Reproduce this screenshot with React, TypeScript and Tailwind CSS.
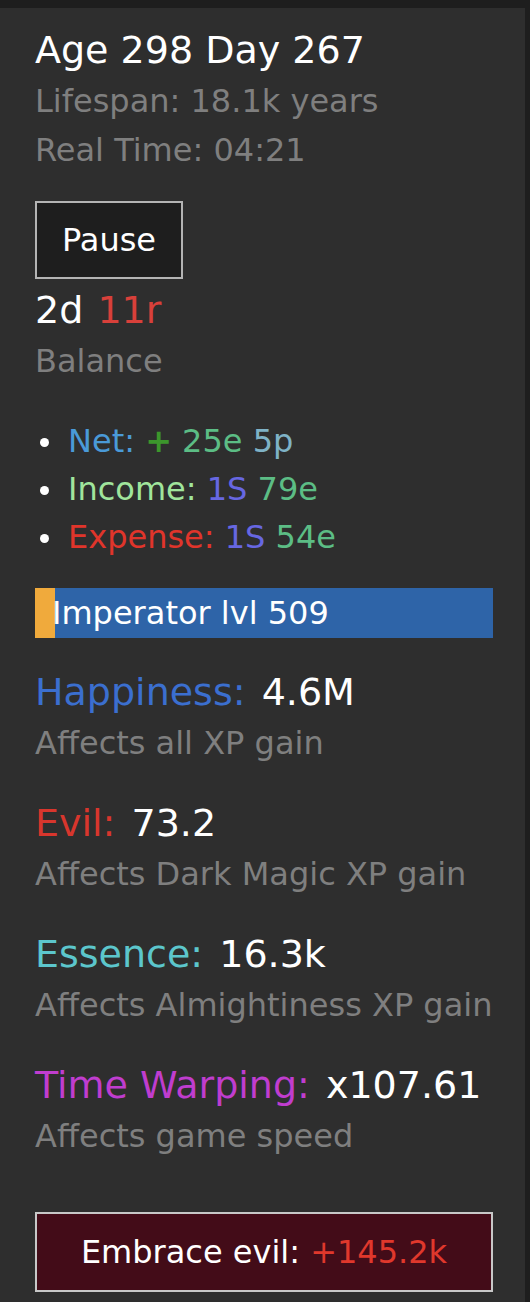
import React from 'react';

interface StatProps {
  label: string;
  labelClass: string;
  value: string;
  hint: string;
  first?: boolean;
}

const Stat: React.FC<StatProps> = ({ label, labelClass, value, hint, first }) => {
  return (
    <div className={first ? 'mt-[28px]' : 'mt-[29px]'}>
      <div className="text-[38px] leading-[53px] text-white">
        <span className={labelClass}>{label}</span> <span className="ml-[4px]">{value}</span>
      </div>
      <div className="text-[32px] leading-[49px] text-[#7f7f7f]">{hint}</div>
    </div>
  );
};

const Bullet: React.FC<{ children: React.ReactNode }> = ({ children }) => (
  <li className="flex items-center text-[32px] leading-[48px]">
    <span className="ml-[5px] mr-[19px] mt-[3px] h-[9px] w-[9px] shrink-0 rounded-full bg-white" />
    <span>{children}</span>
  </li>
);

export default function App() {
  return (
    <div className="min-h-screen bg-[#1e1e1e] pt-2 pr-[5px] font-['DejaVu_Sans',Verdana,sans-serif]">
      <div className="h-[1294px] bg-[#2e2e2e] pl-[35px] pr-[32px] pt-4 pb-[10px]">
        <div className="text-[38px] leading-[53px] text-white">Age 298 Day 267</div>
        <div className="text-[32px] leading-[49px] text-[#7f7f7f]">Lifespan: 18.1k years</div>
        <div className="text-[32px] leading-[49px] text-[#7f7f7f]">Real Time: 04:21</div>

        <button className="mt-[26px] block h-[78px] w-[148px] border-2 border-[#b4b4b4] bg-[#1e1e1e] text-[32px] leading-[49px] text-white">
          Pause
        </button>

        <div className="mt-[5px] text-[38px] leading-[53px] text-white">
          2d <span className="ml-[2px] text-[#d8403a]">11r</span>
        </div>
        <div className="text-[32px] leading-[49px] text-[#7f7f7f]">Balance</div>

        <ul className="mt-[31px]">
          <Bullet>
            <span className="text-[#4a9ad8]">Net: </span>
            <span className="font-bold text-[#3c962c]">+</span>{' '}
            <span className="text-[#5cbd85]">25e</span>{' '}
            <span className="text-[#7fb2c6]">5p</span>
          </Bullet>
          <Bullet>
            <span className="text-[#a0e59c]">Income: </span>
            <span className="text-[#6767e2]">1S</span>{' '}
            <span className="text-[#5cbd85]">79e</span>
          </Bullet>
          <Bullet>
            <span className="text-[#e0352b]">Expense: </span>
            <span className="text-[#6767e2]">1S</span>{' '}
            <span className="text-[#5cbd85]">54e</span>
          </Bullet>
        </ul>

        <div className="relative mt-[27px] h-[50px] bg-[#2e64a8]">
          <div className="h-full w-[20px] bg-[#f0aa3c]" />
          <div className="absolute inset-0 pl-[17px] text-[32px] leading-[50px] text-white">
            Imperator lvl 509
          </div>
        </div>

        <Stat first label="Happiness:" labelClass="text-[#3b6fcf]" value="4.6M" hint="Affects all XP gain" />
        <Stat label="Evil:" labelClass="text-[#d8362d]" value="73.2" hint="Affects Dark Magic XP gain" />
        <Stat label="Essence:" labelClass="text-[#5cc6cc]" value="16.3k" hint="Affects Almightiness XP gain" />
        <Stat label="Time Warping:" labelClass="text-[#c03dcf]" value="x107.61" hint="Affects game speed" />

        <button className="mt-[51px] block h-[80px] w-full border-2 border-[#c8c8c8] bg-[#430c18] text-[32px] leading-[48px] text-white">
          Embrace evil: <span className="text-[#e0382c]">+145.2k</span>
        </button>
      </div>
    </div>
  );
}
